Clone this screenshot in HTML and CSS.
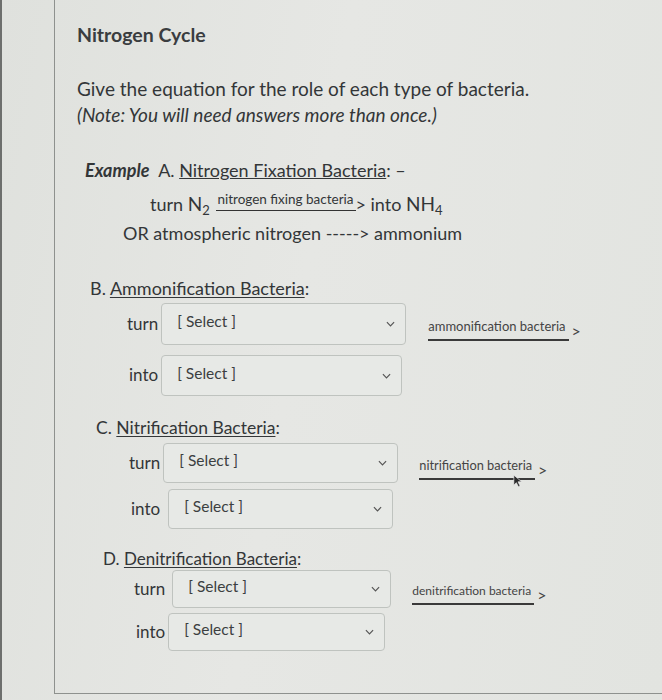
FILE: index.html
```html
<!DOCTYPE html>
<html lang="en">
<head>
<meta charset="utf-8">
<title>Nitrogen Cycle</title>
<link rel="stylesheet" href="styles.css">
</head>
<body>
<div class="page">
  <div class="card">
    <h2 class="title">Nitrogen Cycle</h2>
    <p class="intro">Give the equation for the role of each type of bacteria.<br><em>(Note: You will need answers more than once.)</em></p>

    <div class="example">
      <p class="ex-head"><strong><em>Example</em></strong>&nbsp; A. <u>Nitrogen Fixation Bacteria</u>: –</p>
      <p class="ex-eq">turn <span class="chem">N<sub>2</sub></span> <span class="arrow">nitrogen fixing bacteria</span>&gt; into <span class="chem">NH<sub>4</sub></span></p>
      <p class="ex-or">OR atmospheric nitrogen -----&gt; ammonium</p>
    </div>

    <section class="q q-b">
      <p class="q-head">B. <u>Ammonification Bacteria</u>:</p>
      <div class="row row-turn">
        <span class="lbl">turn</span>
        <div class="sel"><span>[ Select ]</span><svg class="chev" viewBox="0 0 10 6" width="9" height="6"><path d="M1 1 L5 5 L9 1" fill="none" stroke="#555" stroke-width="1.3"/></svg></div>
        <span class="rx"><span class="rx-text">ammonification bacteria</span><span class="gt">&gt;</span></span>
      </div>
      <div class="row row-into">
        <span class="lbl">into</span>
        <div class="sel"><span>[ Select ]</span><svg class="chev" viewBox="0 0 10 6" width="9" height="6"><path d="M1 1 L5 5 L9 1" fill="none" stroke="#555" stroke-width="1.3"/></svg></div>
      </div>
    </section>

    <section class="q q-c">
      <p class="q-head">C. <u>Nitrification Bacteria</u>:</p>
      <div class="row row-turn">
        <span class="lbl">turn</span>
        <div class="sel"><span>[ Select ]</span><svg class="chev" viewBox="0 0 10 6" width="9" height="6"><path d="M1 1 L5 5 L9 1" fill="none" stroke="#555" stroke-width="1.3"/></svg></div>
        <span class="rx"><span class="rx-text">nitrification bacteria</span><span class="gt">&gt;</span>
          <svg class="cursor" viewBox="0 0 12 16" width="10" height="14"><path d="M1 1 L1 13 L4 10 L6.5 15 L8.5 14 L6 9 L10.5 9 Z" fill="#2a2a2a" stroke="#eee" stroke-width="0.8"/></svg>
        </span>
      </div>
      <div class="row row-into">
        <span class="lbl">into</span>
        <div class="sel"><span>[ Select ]</span><svg class="chev" viewBox="0 0 10 6" width="9" height="6"><path d="M1 1 L5 5 L9 1" fill="none" stroke="#555" stroke-width="1.3"/></svg></div>
      </div>
    </section>

    <section class="q q-d">
      <p class="q-head">D. <u>Denitrification Bacteria</u>:</p>
      <div class="row row-turn">
        <span class="lbl">turn</span>
        <div class="sel"><span>[ Select ]</span><svg class="chev" viewBox="0 0 10 6" width="9" height="6"><path d="M1 1 L5 5 L9 1" fill="none" stroke="#555" stroke-width="1.3"/></svg></div>
        <span class="rx"><span class="rx-text">denitrification bacteria</span><span class="gt">&gt;</span></span>
      </div>
      <div class="row row-into">
        <span class="lbl">into</span>
        <div class="sel"><span>[ Select ]</span><svg class="chev" viewBox="0 0 10 6" width="9" height="6"><path d="M1 1 L5 5 L9 1" fill="none" stroke="#555" stroke-width="1.3"/></svg></div>
      </div>
    </section>
  </div>
</div>
</body>
</html>
```

FILE: styles.css
```css
* { box-sizing: border-box; }
html, body { margin: 0; padding: 0; }
body {
  background: linear-gradient(100deg, #dfe1dd 0%, #e6e7e4 45%, #e2e4e0 100%);
  font-family: Lato, "Open Sans", sans-serif;
  color: #333638;
  width: 662px;
  height: 700px;
  overflow: hidden;
}
.page {
  height: 700px;
  border-left: 2px solid #6d6f6d;
  padding-left: 52px;
}
.card {
  border-left: 1px solid #8e918e;
  border-bottom: 1px solid #8e918e;
  padding: 23px 0 42px 22px;
  width: 608px;
}
p { margin: 0; }
.title {
  margin: 0;
  font-size: 19.5px;
  line-height: 24px;
  font-weight: 700;
  color: #3a3d40;
}
.intro {
  margin-top: 29px;
  font-size: 19px;
  line-height: 26px;
}
.example {
  margin-top: 31px;
  padding-left: 8px;
  font-size: 18px;
}
.ex-head { line-height: 22px; }
.ex-eq {
  line-height: 22px;
  margin-top: 11px;
  padding-left: 65px;
}
.chem { font-size: 19px; }
.chem sub { font-size: 13px; vertical-align: -4px; line-height: 0; }
.arrow {
  display: inline-block;
  font-size: 13.5px;
  line-height: 14px;
  padding: 0 2px 4px 1px;
  border-bottom: 1px solid #333;
  vertical-align: 7px;
  margin-left: 2px;
}
.ex-or {
  line-height: 22px;
  margin-top: 7px;
  padding-left: 38px;
}
.q-head {
  font-size: 18px;
  line-height: 22px;
}
.q-head u { text-underline-offset: 2px; }
.q-b { margin-top: 33px; padding-left: 13px; }
.q-c { margin-top: 21px; padding-left: 19px; }
.q-d { margin-top: 19px; padding-left: 26px; }
.row {
  display: flex;
  align-items: center;
  font-size: 17px;
}
.lbl { margin-right: 3px; position: relative; top: -1px; }
.sel {
  display: flex;
  align-items: center;
  justify-content: space-between;
  height: 42px;
  padding: 0 10px 0 15px;
  border: 1px solid #bfc3bf;
  border-radius: 4px;
  background: #e7e9e6;
  font-size: 15.5px;
  color: #3c3f41;
}
.sel span { position: relative; top: -3px; }
.chev { flex: none; }
.rx {
  position: relative;
  display: inline-flex;
  align-items: flex-end;
  margin-left: 22px;
  font-size: 13px;
}
.rx-text {
  padding: 0 3px 5px 0;
  border-bottom: 2px solid #3a3a3a;
  color: #444;
  position: relative;
  top: 5px;
}
.gt { margin-left: 3px; position: relative; top: 3px; font-size: 16px; line-height: 16px; color: #444; }
.cursor { position: absolute; left: 94px; top: 22px; }

.q-b .row-turn { margin-top: 4px; margin-left: 37px; }
.q-b .row-into { margin-top: 10px; margin-left: 39px; }
.q-b .row-turn .sel { width: 245px; }
.q-b .row-into .sel { width: 241px; height: 41px; }

.q-c .q-head { font-size: 17.5px; }
.q-c .row-turn { margin-top: 4px; margin-left: 33px; }
.q-c .row-into { margin-top: 6px; margin-left: 35px; }
.q-c .sel { height: 40px; }
.q-c .row-turn .sel { width: 235px; }
.q-c .row-into .sel { width: 225px; margin-left: 5px; }
.q-c .rx { margin-left: 21px; font-size: 12.8px; }

.q-d .q-head { font-size: 17px; }
.q-d .row-turn { margin-top: 0px; margin-left: 31px; }
.q-d .row-into { margin-top: 5px; margin-left: 33px; }
.q-d .sel { height: 38px; }
.q-d .row-turn .sel { width: 219px; margin-left: 4px; }
.q-d .row-into .sel { width: 217px; }
.q-d .rx { margin-left: 21px; font-size: 12px; }
```
